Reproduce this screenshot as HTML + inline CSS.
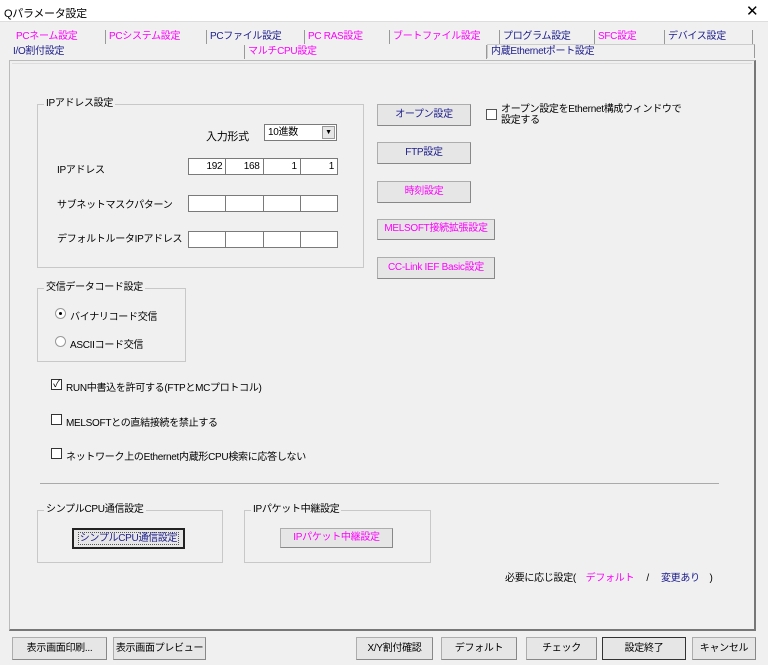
<!DOCTYPE html><html><head><meta charset="utf-8"><style>
*{box-sizing:border-box;margin:0;padding:0}
body{width:768px;height:665px;background:#f0f0f0;font-family:"Liberation Sans","Noto Sans CJK JP",sans-serif;font-size:10px;color:#000;position:relative;overflow:hidden;letter-spacing:-0.3px}
.a{position:absolute;white-space:nowrap}
.m{color:#f0f}.b{color:#1c1c8c}
.tb{position:absolute;top:0;left:0;width:768px;height:22px;background:#fff;border-bottom:1px solid #ddd}
.tab{position:absolute;height:14px;border-right:1px solid #999;line-height:14px;padding-left:3px}
.grp{position:absolute;border:1px solid #c8c8c8}
.grp>span{position:absolute;top:-7px;left:6px;background:#f0f0f0;padding:0 2px;line-height:12px}
.btn{position:absolute;background:#e6e6e6;border:1px solid #adadad;border-right-color:#888;border-bottom-color:#888;text-align:center;line-height:18px}
.box{position:absolute;background:#fff;border:1px solid #7a7a7a;height:17px;display:flex}
.box div{flex:1;height:15px;border-right:1px solid #7a7a7a;text-align:right;padding-right:3px;line-height:15px}
.box div:last-child{border-right:0}
.cb{position:absolute;width:11px;height:11px;background:#fff;border:1px solid #333}
.rb{position:absolute;width:11px;height:11px;border-radius:50%;background:#fff;border:1px solid #999}
</style></head><body>
<div class="tb"><span class="a" style="left:4px;top:5px;font-size:11px">Qパラメータ設定</span><span class="a" style="left:746px;top:2px;font-size:15px">✕</span></div>
<div class="tab m" style="left:13px;top:30px;width:93px">PCネーム設定</div>
<div class="tab m" style="left:106px;top:30px;width:101px">PCシステム設定</div>
<div class="tab b" style="left:207px;top:30px;width:98px">PCファイル設定</div>
<div class="tab m" style="left:305px;top:30px;width:85px">PC RAS設定</div>
<div class="tab m" style="left:390px;top:30px;width:110px">ブートファイル設定</div>
<div class="tab b" style="left:500px;top:30px;width:95px">プログラム設定</div>
<div class="tab m" style="left:595px;top:30px;width:70px">SFC設定</div>
<div class="tab b" style="left:665px;top:30px;width:88px">デバイス設定</div>
<div class="tab b" style="left:10px;top:45px;width:235px">I/O割付設定</div>
<div class="tab m" style="left:245px;top:45px;width:242px">マルチCPU設定</div>
<div class="tab b" style="left:487px;top:44px;width:268px;border-top:1px solid #ccc;border-left:1px solid #ccc">内蔵Ethernetポート設定</div>
<div style="position:absolute;left:9px;top:60px;width:747px;height:571px;border:1px solid #bbb;border-right:2px solid #777;border-bottom:2px solid #777"></div>
<div style="position:absolute;left:12px;top:63px;width:740px;height:1px;background:#ddd"></div>

<div class="grp" style="left:37px;top:104px;width:327px;height:164px"><span>IPアドレス設定</span></div>
<span class="a" style="left:206px;top:128px;font-size:11px">入力形式</span>
<div style="position:absolute;left:264px;top:124px;width:73px;height:17px;background:#fff;border:1px solid #7a7a7a;line-height:15px;padding-left:3px">10進数<div style="position:absolute;right:1px;top:1px;width:13px;height:13px;background:#e6e6e6;border:1px solid #999;font-size:7px;text-align:center;line-height:12px">▼</div></div>
<span class="a" style="left:57px;top:161px">IPアドレス</span>
<div class="box" style="left:188px;top:158px;width:150px"><div>192</div><div>168</div><div>1</div><div>1</div></div>
<span class="a" style="left:57px;top:196px">サブネットマスクパターン</span>
<div class="box" style="left:188px;top:195px;width:150px"><div></div><div></div><div></div><div></div></div>
<span class="a" style="left:57px;top:230px">デフォルトルータIPアドレス</span>
<div class="box" style="left:188px;top:231px;width:150px"><div></div><div></div><div></div><div></div></div>

<div class="btn b" style="left:377px;top:104px;width:94px;height:22px;line-height:20px">オープン設定</div>
<div class="cb" style="left:486px;top:109px;border-color:#555"></div>
<span class="a" style="left:501px;top:104px;line-height:11px">オープン設定をEthernet構成ウィンドウで<br>設定する</span>
<div class="btn b" style="left:377px;top:142px;width:94px;height:22px;line-height:20px">FTP設定</div>
<div class="btn m" style="left:377px;top:181px;width:94px;height:22px;line-height:20px">時刻設定</div>
<div class="btn m" style="left:377px;top:219px;width:118px;height:21px">MELSOFT接続拡張設定</div>
<div class="btn m" style="left:377px;top:257px;width:118px;height:22px;line-height:20px">CC-Link IEF Basic設定</div>

<div class="grp" style="left:37px;top:288px;width:149px;height:74px"><span>交信データコード設定</span></div>
<div class="rb" style="left:55px;top:308px"><div style="position:absolute;left:3px;top:3px;width:3px;height:3px;background:#000;border-radius:50%"></div></div>
<span class="a" style="left:70px;top:308px">バイナリコード交信</span>
<div class="rb" style="left:55px;top:336px"></div>
<span class="a" style="left:70px;top:336px">ASCIIコード交信</span>

<div class="cb" style="left:51px;top:379px;font-size:10px;line-height:9px;text-align:center">✓</div>
<span class="a" style="left:66px;top:379px">RUN中書込を許可する(FTPとMCプロトコル)</span>
<div class="cb" style="left:51px;top:414px"></div>
<span class="a" style="left:66px;top:414px">MELSOFTとの直結接続を禁止する</span>
<div class="cb" style="left:51px;top:448px"></div>
<span class="a" style="left:66px;top:448px">ネットワーク上のEthernet内蔵形CPU検索に応答しない</span>

<div style="position:absolute;left:40px;top:483px;width:679px;height:1px;background:#aaa"></div>
<div class="grp" style="left:37px;top:510px;width:186px;height:53px"><span>シンプルCPU通信設定</span></div>
<div class="btn b" style="left:72px;top:528px;width:113px;height:21px;border:2px solid #222;line-height:17px"><span style="border:1px dotted #555;padding:0 1px">シンプルCPU通信設定</span></div>
<div class="grp" style="left:244px;top:510px;width:187px;height:53px"><span>IPパケット中継設定</span></div>
<div class="btn m" style="left:280px;top:528px;width:113px;height:20px">IPパケット中継設定</div>
<span class="a" style="left:505px;top:569px">必要に応じ設定(　<span class="m">デフォルト</span>　 /　 <span class="b">変更あり</span>　)</span>

<div class="btn" style="left:12px;top:637px;width:95px;height:23px;line-height:21px">表示画面印刷...</div>
<div class="btn" style="left:113px;top:637px;width:93px;height:23px;line-height:21px">表示画面プレビュー</div>
<div class="btn" style="left:356px;top:637px;width:77px;height:23px;line-height:21px">X/Y割付確認</div>
<div class="btn" style="left:441px;top:637px;width:76px;height:23px;line-height:21px">デフォルト</div>
<div class="btn" style="left:526px;top:637px;width:71px;height:23px;line-height:21px">チェック</div>
<div class="btn" style="left:602px;top:637px;width:84px;height:23px;line-height:21px;border:1px solid #333">設定終了</div>
<div class="btn" style="left:692px;top:637px;width:64px;height:23px;line-height:21px">キャンセル</div>
</body></html>
